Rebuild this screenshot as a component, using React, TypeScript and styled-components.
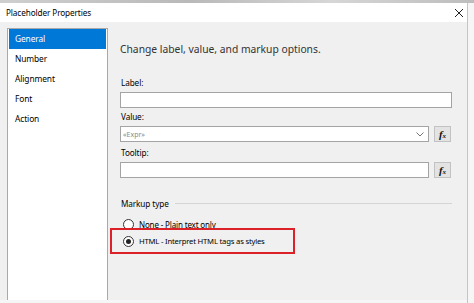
import styled, { createGlobalStyle } from "styled-components";

const GlobalStyle = createGlobalStyle`
  html, body {
    margin: 0;
    padding: 0;
    background: #f6f6f6;
  }
  body {
    font-family: "Noto Sans", "Liberation Sans", sans-serif;
    color: #000;
  }
`;

const Page = styled.div`
  width: 474px;
  height: 303px;
  overflow: hidden;
  display: flex;
  flex-direction: column;
`;

const BackdropStrip = styled.div`
  height: 3px;
  background: linear-gradient(90deg, #cfcfcf, #b9b9b9 40%, #d6d6d6 70%, #bdbdbd);
`;

const Window = styled.div`
  width: 468px;
  flex: 1;
  display: flex;
  flex-direction: column;
  border-right: 1px solid #c4c4c4;
  box-sizing: border-box;
`;

const TitleBar = styled.div`
  height: 19px;
  background: #fff;
  display: flex;
  align-items: center;
  justify-content: space-between;
  padding: 0 3px 0 6px;
  font-size: 8.2px;
  letter-spacing: -0.1px;
`;

const CloseButton = styled.svg`
  width: 10px;
  height: 10px;
`;

const Body = styled.div`
  height: 278px;
  background: #f0f0f0;
  display: flex;
  padding: 6px 0 0 7px;
  box-sizing: border-box;
`;

const TabList = styled.div`
  width: 101px;
  background: #fff;
  border: 1px solid #a9a9a9;
  border-bottom: none;
  box-sizing: border-box;
  padding: 0 1px;
  display: flex;
  flex-direction: column;
`;

const TabItem = styled.div<{ $active?: boolean }>`
  height: 20px;
  line-height: 19px;
  padding-left: 6px;
  font-size: 8.4px;
  letter-spacing: -0.1px;
  background: ${(p) => (p.$active ? "#0078d7" : "transparent")};
  color: ${(p) => (p.$active ? "#fff" : "#000")};
`;

const Content = styled.div`
  width: 332px;
  margin-left: 12px;
  padding-top: 12px;
  display: flex;
  flex-direction: column;
`;

const Heading = styled.div`
  font-size: 10.3px;
  line-height: 18px;
  color: #333;
  margin-bottom: 18px;
`;

const FieldLabel = styled.div<{ $gap?: number }>`
  font-size: 8.2px;
  line-height: 14px;
  margin-top: ${(p) => p.$gap ?? 0}px;
  margin-bottom: 2px;
  padding-left: 1px;
  letter-spacing: -0.1px;
`;

const FieldRow = styled.div`
  display: flex;
  align-items: center;
  gap: 5px;
`;

const TextBox = styled.div<{ $width: number }>`
  width: ${(p) => p.$width}px;
  height: 16px;
  box-sizing: border-box;
  background: #fff;
  border: 1px solid #a4a4a4;
  display: flex;
  align-items: center;
  justify-content: space-between;
  padding: 0 4px 0 2px;
`;

const Placeholder = styled.span`
  font-size: 7px;
  color: #8a8a8a;
`;

const Chevron = styled.svg`
  width: 8px;
  height: 5px;
`;

const FxButton = styled.div`
  width: 17px;
  height: 16px;
  box-sizing: border-box;
  background: #e3e3e3;
  border: 1px solid #c2c2c2;
  display: flex;
  align-items: center;
  justify-content: center;
  font-family: "Liberation Serif", serif;
  font-style: italic;
  font-weight: bold;
  font-size: 11px;
  line-height: 1;
  color: #111;
`;

const Sub = styled.span`
  font-size: 7px;
  margin-top: 4px;
`;

const GroupHeader = styled.div`
  margin-top: 19px;
  display: flex;
  align-items: center;
  gap: 6px;
  font-size: 8.2px;
  line-height: 14px;
  padding-left: 1px;
  letter-spacing: -0.1px;
`;

const GroupLine = styled.div`
  flex: 1;
  height: 1px;
  background: #d4d4d4;
  margin-top: -1px;
`;

const RadioRow = styled.div`
  display: flex;
  align-items: center;
  gap: 5px;
  height: 14px;
  padding-left: 3px;
  font-size: 8px;
  letter-spacing: -0.15px;
  margin-top: 6px;
`;

const Highlight = styled.div`
  width: 185px;
  height: 26px;
  box-sizing: border-box;
  margin: -3px 0 0 -10px;
  border: 2px solid #dd2128;
  display: flex;
  align-items: center;
  gap: 5px;
  padding-left: 11px;
  font-size: 7.7px;
  letter-spacing: -0.2px;
`;

const Radio = styled.span<{ $checked?: boolean }>`
  width: 11px;
  height: 11px;
  box-sizing: border-box;
  border-radius: 50%;
  border: 1px solid #333;
  background: #fff;
  display: flex;
  align-items: center;
  justify-content: center;

  &::after {
    content: "";
    width: 5px;
    height: 5px;
    border-radius: 50%;
    background: ${(p) => (p.$checked ? "#222" : "transparent")};
  }
`;

const tabs = ["General", "Number", "Alignment", "Font", "Action"];

function Fx() {
  return (
    <FxButton>
      f<Sub>x</Sub>
    </FxButton>
  );
}

export default function App() {
  return (
    <Page>
      <GlobalStyle />
      <BackdropStrip />
      <Window>
        <TitleBar>
          <span>Placeholder Properties</span>
          <CloseButton viewBox="0 0 10 10">
            <path d="M1 1 L9 9 M9 1 L1 9" stroke="#222" strokeWidth="1" />
          </CloseButton>
        </TitleBar>
        <Body>
          <TabList>
            {tabs.map((t, i) => (
              <TabItem key={t} $active={i === 0}>
                {t}
              </TabItem>
            ))}
          </TabList>
          <Content>
            <Heading>Change label, value, and markup options.</Heading>

            <FieldLabel>Label:</FieldLabel>
            <TextBox $width={332} />

            <FieldLabel $gap={2}>Value:</FieldLabel>
            <FieldRow>
              <TextBox $width={309}>
                <Placeholder>«Expr»</Placeholder>
                <Chevron viewBox="0 0 8 5">
                  <path d="M0.5 0.5 L4 4 L7.5 0.5" fill="none" stroke="#777" strokeWidth="1" />
                </Chevron>
              </TextBox>
              <Fx />
            </FieldRow>

            <FieldLabel $gap={4}>Tooltip:</FieldLabel>
            <FieldRow>
              <TextBox $width={309} />
              <Fx />
            </FieldRow>

            <GroupHeader>
              Markup type
              <GroupLine />
            </GroupHeader>
            <RadioRow>
              <Radio />
              None - Plain text only
            </RadioRow>
            <Highlight>
              <Radio $checked />
              HTML - Interpret HTML tags as styles
            </Highlight>
          </Content>
        </Body>
      </Window>
    </Page>
  );
}
